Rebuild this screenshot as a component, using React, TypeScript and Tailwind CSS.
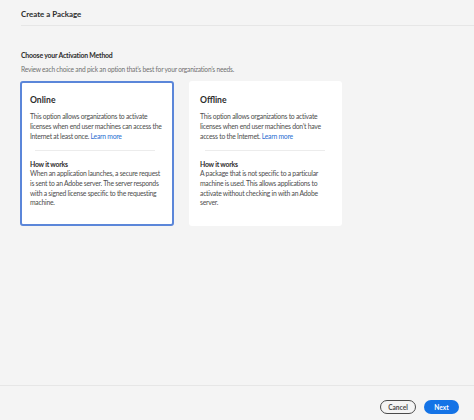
import React from 'react'

type Method = {
  title: string
  body: string
  how: string
  selected?: boolean
}

const methods: Method[] = [
  {
    title: 'Online',
    body: 'This option allows organizations to activate licenses when end user machines can access the Internet at least once.',
    how: 'When an application launches, a secure request is sent to an Adobe server. The server responds with a signed license specific to the requesting machine.',
    selected: true,
  },
  {
    title: 'Offline',
    body: 'This option allows organizations to activate licenses when end user machines don\u2019t have access to the Internet.',
    how: 'A package that is not specific to a particular machine is used. This allows applications to activate without checking in with an Adobe server.',
  },
]

function MethodCard({ m }: { m: Method }) {
  return (
    <div
      className={
        m.selected
          ? 'w-[154px] h-[145px] bg-white rounded-[3px] border-2 border-[#5b86d9] pl-[8px] pr-[7px] pt-[11px]'
          : 'w-[153px] h-[145px] bg-white rounded-[3px] border-2 border-transparent pl-[9px] pr-[7px] pt-[11px]'
      }
    >
      <div className="text-[8.6px] leading-[12px] font-bold text-[#2c2c2c]">{m.title}</div>
      <p className="mt-[5px] text-[6.8px] leading-[10px] tracking-[-0.25px] text-[#4e4e4e]">
        {m.body} <span className="text-[#2d6fd2]">Learn more</span>
      </p>
      <div className="ml-[5px] w-[120px] mt-[9px] h-px bg-[#ececec]" />
      <div className="mt-[8px] text-[6.8px] leading-[10px] tracking-[-0.2px] font-bold text-[#2c2c2c]">How it works</div>
      <p className="text-[6.8px] leading-[9.8px] tracking-[-0.25px] text-[#4e4e4e]">{m.how}</p>
    </div>
  )
}

export default function App() {
  return (
    <div
      className="w-[474px] h-[420px] bg-[#f4f4f4] flex flex-col"
      style={{ fontFamily: 'Lato, "Noto Sans", sans-serif' }}
    >
      <div className="pl-[21px] pt-[8px]">
        <div className="text-[7.9px] leading-[12px] font-bold text-[#2c2c2c]">Create a Package</div>
        <div className="mt-[5px] h-px bg-[#e6e6e6]" />
      </div>
      <div className="flex-1 px-[20px] pt-[24px]">
        <div className="pl-[1px] text-[6.9px] leading-[10px] font-bold tracking-[-0.2px] text-[#2c2c2c]">Choose your Activation Method</div>
        <div className="pl-[1px] mt-[4px] text-[6.6px] leading-[10px] tracking-[-0.2px] text-[#707070]">
          Review each choice and pick an option that&rsquo;s best for your organization&rsquo;s needs.
        </div>
        <div className="mt-[7px] flex gap-[15px]">
          {methods.map((m) => (
            <MethodCard key={m.title} m={m} />
          ))}
        </div>
      </div>
      <div className="h-[35px] border-t border-[#e6e6e6] flex items-center justify-end gap-[8px] pr-[15px] pt-[8px]">
        <button className="h-[14px] w-[36px] rounded-full border-[1.5px] border-[#4b4b4b] text-[6.6px] font-bold text-[#4b4b4b] leading-none">
          Cancel
        </button>
        <button className="h-[14px] w-[35px] rounded-full bg-[#1473e6] text-[6.6px] font-bold text-white leading-none">
          Next
        </button>
      </div>
    </div>
  )
}
